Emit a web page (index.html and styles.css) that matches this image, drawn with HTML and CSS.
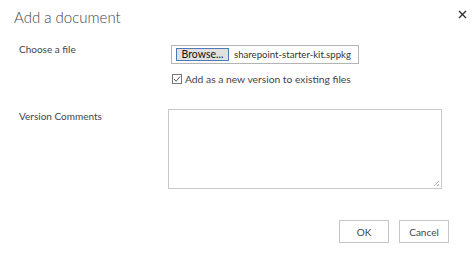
FILE: index.html
```html
<!DOCTYPE html>
<html lang="en">
  <head>
    <title>Add a document</title>
  <link rel="stylesheet" href="styles.css">
  </head>
  <body>
  <div class="dialog">
    <div class="dialog-header">
      <h1 class="dialog-title">Add a document</h1>
      <button class="close-btn" aria-label="Close">
        <svg width="9" height="9" viewBox="0 0 9 9">
          <path d="M1 1 L8 8 M8 1 L1 8" stroke="#333" stroke-width="1.4" fill="none"/>
        </svg>
      </button>
    </div>

    <div class="form">
      <div class="form-row">
        <div class="form-label">Choose a file</div>
        <div class="form-field">
          <div class="file-input">
            <span class="browse-btn">Browse...</span>
            <span class="file-name">sharepoint-starter-kit.sppkg</span>
          </div>
          <label class="check-row">
            <span class="check-box">
              <svg width="8" height="8" viewBox="0 0 8 8">
                <path d="M1 4 L3.2 6.3 L7 1.5" stroke="#555" stroke-width="1" fill="none"/>
              </svg>
            </span>
            Add as a new version to existing files
          </label>
        </div>
      </div>

      <div class="form-row comments-row">
        <div class="form-label">Version Comments</div>
        <div class="form-field">
          <div class="comments-box">
            <span class="grip"></span>
          </div>
        </div>
      </div>
    </div>

    <div class="dialog-footer">
      <button class="dlg-btn">OK</button>
      <button class="dlg-btn">Cancel</button>
    </div>
  </div>
  </body></html>
```

FILE: styles.css
```css
:root {
  --text: #444444;
  --border: #c8c8c8;
  --light: #ffffff;
}

* {
  margin: 0;
  padding: 0;
  box-sizing: border-box;
  font-family: 'Lato', 'Open Sans', sans-serif;
}

body {
  background: var(--light);
  color: var(--text);
}

.dialog {
  width: 474px;
  height: 264px;
  display: flex;
  flex-direction: column;
}

.dialog-header {
  display: flex;
  justify-content: space-between;
  align-items: flex-start;
  padding: 8px 7px 0 14px;
  height: 40px;
}

.dialog-title {
  font-size: 15px;
  font-weight: 300;
  color: #444;
}

.close-btn {
  background: none;
  border: none;
  width: 9px;
  height: 9px;
  margin-top: 2px;
  display: flex;
}

.form {
  padding-left: 19px;
}

.form-row {
  display: grid;
  grid-template-columns: 149px 274px;
}

.form-label {
  font-size: 10px;
  line-height: 14px;
  padding-top: 2px;
  color: #444;
}

.file-input {
  width: 188px;
  height: 19px;
  margin-top: 5px;
  margin-left: 3px;
  border: 1px solid #b4b4b4;
  display: flex;
  align-items: center;
  padding-left: 4px;
  gap: 5px;
  white-space: nowrap;
  overflow: hidden;
}

.browse-btn {
  height: 13px;
  width: 53px;
  flex-shrink: 0;
  border: 1px solid #4d7ab3;
  background: #e1e1e1;
  font-size: 10.5px;
  line-height: 11px;
  color: #111;
  text-align: center;
}

.file-name {
  font-size: 9.6px;
  color: #333;
}

.check-row {
  display: flex;
  align-items: center;
  gap: 3px;
  margin-top: 9px;
  margin-left: 4px;
  font-size: 10.3px;
  color: #444;
}

.check-box {
  width: 10px;
  height: 10px;
  border: 1px solid #777;
  display: flex;
  align-items: center;
  justify-content: center;
}

.comments-row {
  margin-top: 24px;
}

.comments-row .form-label {
  padding-top: 0;
}

.comments-box {
  width: 274px;
  height: 80px;
  border: 1px solid var(--border);
  position: relative;
}

.grip {
  position: absolute;
  right: 2px;
  bottom: 2px;
  width: 6px;
  height: 6px;
  background: linear-gradient(135deg, transparent 55%, #bbb 55%, #bbb 65%, transparent 65%, transparent 80%, #bbb 80%);
}

.dialog-footer {
  display: flex;
  justify-content: flex-end;
  gap: 10px;
  padding: 31px 25px 0 0;
}

.dlg-btn {
  width: 50px;
  height: 23px;
  border: 1px solid #c6c6c6;
  background: var(--light);
  font-size: 10px;
  color: #444;
}
```
